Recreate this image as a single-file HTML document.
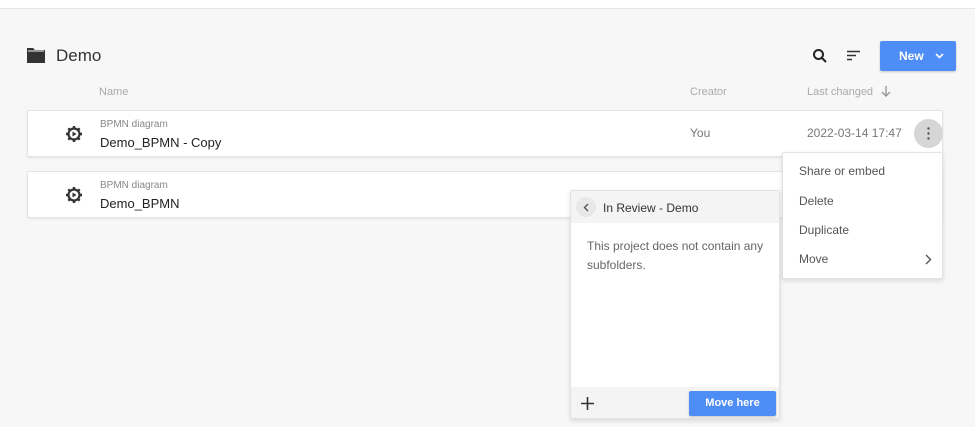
<!DOCTYPE html>
<html><head><style>
*{margin:0;padding:0;box-sizing:border-box}
body{width:975px;height:427px;background:#f7f7f7;font-family:"Liberation Sans",sans-serif;position:relative;overflow:hidden;color:#333}
.a{position:absolute}
.row{position:absolute;left:27px;width:916px;height:47px;background:#fff;border:1px solid #e4e4e4;border-radius:2px;box-shadow:0 1px 2px rgba(0,0,0,.08)}
.sm{font-size:10px;color:#888}
.nm{font-size:13px;color:#222}
.mi{position:absolute;left:16px;font-size:12px;color:#555}
</style></head><body>
<div class="a" style="left:0;top:0;width:975px;height:9px;background:#fff;border-bottom:1px solid #e6e6e6"></div>
<svg class="a" style="left:27px;top:47px" width="18" height="16" viewBox="0 0 18 16"><path d="M0 1h6l2 2h10v13H0z" fill="#333"/><path d="M1 4h16" stroke="#f7f7f7" stroke-width="1"/></svg>
<div class="a" style="left:56px;top:46px;font-size:17px;color:#333">Demo</div>
<svg class="a" style="left:812px;top:48px" width="16" height="16" viewBox="0 0 16 16"><circle cx="6.5" cy="6.5" r="4.5" fill="none" stroke="#222" stroke-width="2"/><path d="M10 10l4 4" stroke="#222" stroke-width="2"/></svg>
<svg class="a" style="left:846px;top:50px" width="16" height="12"><path d="M1 1.5h13M1 5.5h9M1 9.5h5" stroke="#333" stroke-width="1.6"/></svg>
<div class="a" style="left:880px;top:41px;width:76px;height:30px;background:#4d8df5;border-radius:2px;box-shadow:0 1px 2px rgba(0,0,0,.2);color:#fff;font-weight:bold;font-size:12px;line-height:30px;padding-left:19px">New<svg class="a" style="left:55px;top:12px" width="9" height="6"><path d="M1 1l3.5 3.5L8 1" stroke="#fff" stroke-width="1.6" fill="none"/></svg></div>
<div class="a" style="left:99px;top:86px;font-size:11px;color:#aaa">Name</div>
<div class="a" style="left:690px;top:86px;font-size:11px;color:#aaa">Creator</div>
<div class="a" style="left:807px;top:86px;font-size:11px;color:#aaa">Last changed</div>
<svg class="a" style="left:881px;top:86px" width="10" height="12"><path d="M5 0v10M1 6l4 4 4-4" stroke="#999" stroke-width="1.4" fill="none"/></svg>

<div class="row" style="top:110px">
<svg class="a" style="left:37px;top:14px" width="18" height="18" viewBox="0 0 18 18"><circle cx="9" cy="9" r="5.5" fill="none" stroke="#333" stroke-width="2.2"/><path d="M9 1v3M9 14v3M1 9h3M14 9h3M3.3 3.3l2.1 2.1M12.6 12.6l2.1 2.1M3.3 14.7l2.1-2.1M12.6 5.4l2.1-2.1" stroke="#333" stroke-width="2.4"/><path d="M7.5 6.5v5l4-2.5z" fill="#333"/></svg>
<div class="a sm" style="left:72px;top:8px">BPMN diagram</div>
<div class="a nm" style="left:72px;top:24px">Demo_BPMN - Copy</div>
<div class="a" style="left:662px;top:15px;font-size:12px;color:#777">You</div>
<div class="a" style="left:779px;top:15px;font-size:12px;color:#777">2022-03-14 17:47</div>
<div class="a" style="left:886px;top:8px;width:29px;height:29px;border-radius:50%;background:#d6d6d6"><svg class="a" style="left:13px;top:8px" width="3" height="14"><circle cx="1.5" cy="1.5" r="1.2" fill="#555"/><circle cx="1.5" cy="6.5" r="1.2" fill="#555"/><circle cx="1.5" cy="11.5" r="1.2" fill="#555"/></svg></div>
</div>
<div class="row" style="top:171px">
<svg class="a" style="left:37px;top:14px" width="18" height="18" viewBox="0 0 18 18"><circle cx="9" cy="9" r="5.5" fill="none" stroke="#333" stroke-width="2.2"/><path d="M9 1v3M9 14v3M1 9h3M14 9h3M3.3 3.3l2.1 2.1M12.6 12.6l2.1 2.1M3.3 14.7l2.1-2.1M12.6 5.4l2.1-2.1" stroke="#333" stroke-width="2.4"/><path d="M7.5 6.5v5l4-2.5z" fill="#333"/></svg>
<div class="a sm" style="left:72px;top:8px">BPMN diagram</div>
<div class="a nm" style="left:72px;top:24px">Demo_BPMN</div>
</div>

<div class="a" style="left:782px;top:152px;width:161px;height:127px;background:#fff;border:1px solid #e2e2e2;border-radius:2px;box-shadow:0 2px 5px rgba(0,0,0,.12)">
<div class="mi" style="top:11px">Share or embed</div>
<div class="mi" style="top:41px">Delete</div>
<div class="mi" style="top:70px">Duplicate</div>
<div class="mi" style="top:99px">Move</div>
<svg class="a" style="left:142px;top:101px" width="7" height="11"><path d="M1 1l4.5 4.5L1 10" stroke="#555" stroke-width="1.4" fill="none"/></svg>
</div>

<div class="a" style="left:570px;top:190px;width:210px;height:229px;background:#fff;border:1px solid #e2e2e2;border-radius:2px;box-shadow:0 2px 5px rgba(0,0,0,.12);overflow:hidden">
<div class="a" style="left:0;top:0;width:210px;height:32px;background:#f4f4f4"></div>
<div class="a" style="left:5px;top:6px;width:20px;height:20px;border-radius:50%;background:#e8e8e8"><svg class="a" style="left:7px;top:6px" width="6" height="9"><path d="M5 1L1.5 4.5 5 8" stroke="#555" stroke-width="1.4" fill="none"/></svg></div>
<div class="a" style="left:32px;top:10px;font-size:12px;color:#333">In Review - Demo</div>
<div class="a" style="left:16px;top:46px;font-size:12px;line-height:19px;color:#666;width:185px">This project does not contain any subfolders.</div>
<div class="a" style="left:0;top:196px;width:210px;height:33px;background:#f4f4f4"></div>
<svg class="a" style="left:10px;top:206px" width="13" height="13"><path d="M6.5 0v13M0 6.5h13" stroke="#333" stroke-width="1.6"/></svg>
<div class="a" style="left:118px;top:200px;width:87px;height:25px;background:#4d8df5;border-radius:2px;color:#fff;font-weight:bold;font-size:11px;line-height:25px;text-align:center;box-shadow:0 1px 2px rgba(0,0,0,.2)">Move here</div>
</div>
</body></html>
